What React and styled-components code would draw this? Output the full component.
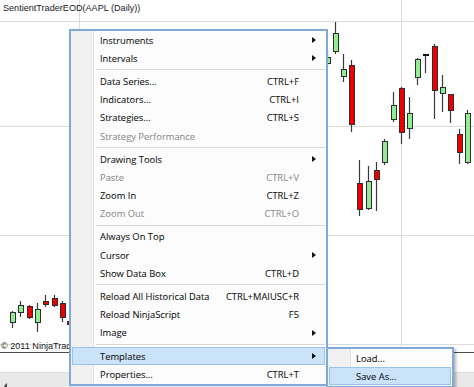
import React from 'react';
import styled, { createGlobalStyle } from 'styled-components';

const GlobalStyle = createGlobalStyle`
  html, body {
    margin: 0;
    padding: 0;
    background: #fff;
  }
  body {
    width: 474px;
    height: 387px;
    overflow: hidden;
  }
`;

const Screen = styled.div`
  position: relative;
  width: 474px;
  height: 387px;
  display: flex;
  flex-direction: column;
  background: #fff;
  overflow: hidden;
  font-family: 'Liberation Sans', Arial, sans-serif;
`;

const ChartPanel = styled.div`
  position: relative;
  flex: none;
  height: 352px;
  border-bottom: 1px solid #4a4a4a;
`;

const ChartTitle = styled.div`
  position: absolute;
  top: 3px;
  left: 3px;
  font-size: 9.1px;
  line-height: 11px;
  color: #1a1a1a;
  white-space: nowrap;
`;

const Copyright = styled.div`
  position: absolute;
  left: 1px;
  bottom: 0;
  font-size: 9.1px;
  line-height: 11px;
  color: #1a1a1a;
  white-space: nowrap;
`;

const AxisStrip = styled.div`
  flex: none;
  height: 19px;
  background: #fff;
`;

const ScrollBar = styled.div`
  flex: 1;
  display: flex;
  align-items: flex-end;
  padding-left: 4px;
  background: #e9e9e9;
  border-top: 1px solid #dedede;
`;

const ScrollArrow = styled.span`
  width: 0;
  height: 0;
  margin-bottom: -2px;
  border-right: 3px solid #444;
  border-top: 3px solid transparent;
  border-bottom: 3px solid transparent;
`;

const Menu = styled.div`
  position: absolute;
  left: ${(p) => p.$left}px;
  top: ${(p) => p.$top}px;
  width: ${(p) => p.$width}px;
  box-sizing: border-box;
  padding: 0 1px 1px;
  border: 2px solid #80a8d8;
  background: linear-gradient(
    to right,
    #f1f1f1 0,
    #f1f1f1 22px,
    #e3e3e3 22px,
    #e3e3e3 23px,
    #ffffff 23px,
    #ffffff 24px,
    #fcfcfc 24px
  );
  box-shadow: ${(p) => (p.$shadow ? '2px 2px 3px rgba(0, 0, 0, 0.3)' : 'none')};
  font-family: 'Open Sans', 'Noto Sans', sans-serif;
  font-size: 9.4px;
  -webkit-text-stroke: 0.08px;
`;

const Item = styled.div`
  display: grid;
  grid-template-columns: ${(p) => (p.$sub ? '26px 1fr' : '27px 1fr auto 25px')};
  align-items: center;
  box-sizing: border-box;
  height: 18.2px;
  border: 1px solid ${(p) => (p.$active ? '#98c3ec' : 'transparent')};
  background: ${(p) => (p.$active ? '#cbe3f8' : 'transparent')};
  color: ${(p) => (p.$disabled ? '#8d8d8d' : '#111')};
  white-space: nowrap;
`;

const Label = styled.span`
  grid-column: 2;
`;

const Shortcut = styled.span`
  grid-column: 3;
  text-align: right;
`;

const ArrowCell = styled.span`
  grid-column: 4;
  display: flex;
  padding-left: 13px;
`;

const Arrow = styled.span`
  width: 0;
  height: 0;
  border-left: 4px solid #111;
  border-top: 3.5px solid transparent;
  border-bottom: 3.5px solid transparent;
`;

const Separator = styled.div`
  height: 0;
  margin: 2px 0 1px 24px;
  border-top: 1px solid #d7d7d7;
  border-bottom: 1px solid #fff;
`;

const candles = [
  [10, 311, 328, 312, 322, 'g'],
  [18, 301, 317, 305, 312, 'g'],
  [27, 305, 319, 306, 317, 'r'],
  [35, 303, 332, 309, 322, 'g'],
  [43, 295, 307, 301, 304, 'r'],
  [52, 295, 307, 298, 305, 'r'],
  [60, 301, 322, 303, 317, 'r'],
  [67, 318, 326, 321, 324, 'r'],
  [325, 50, 66, 57, 63, 'g'],
  [333, 22, 54, 33, 51, 'g'],
  [341, 54, 82, 69, 76, 'g'],
  [349, 60, 132, 65, 124, 'r'],
  [357, 160, 216, 183, 209, 'r'],
  [366, 166, 210, 181, 208, 'g'],
  [374, 162, 211, 170, 179, 'r'],
  [382, 139, 165, 141, 162, 'g'],
  [391, 92, 122, 105, 119, 'g'],
  [399, 87, 144, 88, 132, 'r'],
  [407, 97, 139, 113, 128, 'g'],
  [415, 58, 85, 59, 77, 'g'],
  [423, 54, 73, 54, 55, 'k'],
  [432, 44, 119, 46, 90, 'r'],
  [440, 75, 112, 87, 93, 'g'],
  [448, 94, 123, 94, 110, 'r'],
  [457, 129, 164, 134, 152, 'r'],
  [465, 110, 164, 113, 162, 'g'],
];

const fills = { g: '#92ec92', r: '#ee0000', k: '#111' };

function PriceChart() {
  return (
    <svg width="474" height="352" style={{ display: 'block' }}>
      <g stroke="#dcdcdc" strokeWidth="1">
        <line x1="79.5" y1="0" x2="79.5" y2="352" />
        <line x1="401.5" y1="0" x2="401.5" y2="352" />
        <line x1="0" y1="21.5" x2="474" y2="21.5" />
        <line x1="0" y1="126.5" x2="474" y2="126.5" />
        <line x1="0" y1="235.5" x2="474" y2="235.5" />
        <line x1="0" y1="344.5" x2="474" y2="344.5" />
      </g>
      {candles.map(([l, hi, lo, top, bottom, c]) => (
        <g key={l}>
          <line x1={l + 2.5} y1={hi} x2={l + 2.5} y2={lo} stroke="#3a3a3a" strokeWidth="1.2" />
          {c === 'k' ? (
            <rect x={l} y={top} width="6" height="2" fill="#111" />
          ) : (
            <rect
              x={l + 0.5}
              y={top + 0.5}
              width="5"
              height={bottom - top}
              fill={fills[c]}
              stroke="#2e2e2e"
              strokeWidth="1"
            />
          )}
        </g>
      ))}
    </svg>
  );
}

const mainItems = [
  { label: 'Instruments', sub: true },
  { label: 'Intervals', sub: true },
  { sep: true },
  { label: 'Data Series...', key: 'CTRL+F' },
  { label: 'Indicators...', key: 'CTRL+I' },
  { label: 'Strategies...', key: 'CTRL+S' },
  { label: 'Strategy Performance', disabled: true },
  { sep: true },
  { label: 'Drawing Tools', sub: true },
  { label: 'Paste', key: 'CTRL+V', disabled: true },
  { label: 'Zoom In', key: 'CTRL+Z' },
  { label: 'Zoom Out', key: 'CTRL+O', disabled: true },
  { sep: true },
  { label: 'Always On Top' },
  { label: 'Cursor', sub: true },
  { label: 'Show Data Box', key: 'CTRL+D' },
  { sep: true },
  { label: 'Reload All Historical Data', key: 'CTRL+MAIUSC+R' },
  { label: 'Reload NinjaScript', key: 'F5' },
  { label: 'Image', sub: true },
  { sep: true },
  { label: 'Templates', sub: true, active: true },
  { label: 'Properties...', key: 'CTRL+T' },
];

export default function App() {
  return (
    <>
      <GlobalStyle />
      <Screen>
        <ChartPanel>
          <PriceChart />
          <ChartTitle>SentientTraderEOD(AAPL (Daily))</ChartTitle>
          <Copyright>© 2011 NinjaTrader, LLC</Copyright>
        </ChartPanel>
        <AxisStrip />
        <ScrollBar>
          <ScrollArrow />
        </ScrollBar>

        <Menu $left={69} $top={29} $width={259}>
          {mainItems.map((it, i) =>
            it.sep ? (
              <Separator key={i} />
            ) : (
              <Item key={i} $disabled={it.disabled} $active={it.active}>
                <Label>{it.label}</Label>
                <Shortcut>{it.key}</Shortcut>
                <ArrowCell>{it.sub && <Arrow />}</ArrowCell>
              </Item>
            )
          )}
        </Menu>

        <Menu $left={326} $top={347} $width={128} $shadow>
          <Item $sub>
            <Label>Load...</Label>
          </Item>
          <Item $sub $active>
            <Label>Save As...</Label>
          </Item>
        </Menu>
      </Screen>
    </>
  );
}
